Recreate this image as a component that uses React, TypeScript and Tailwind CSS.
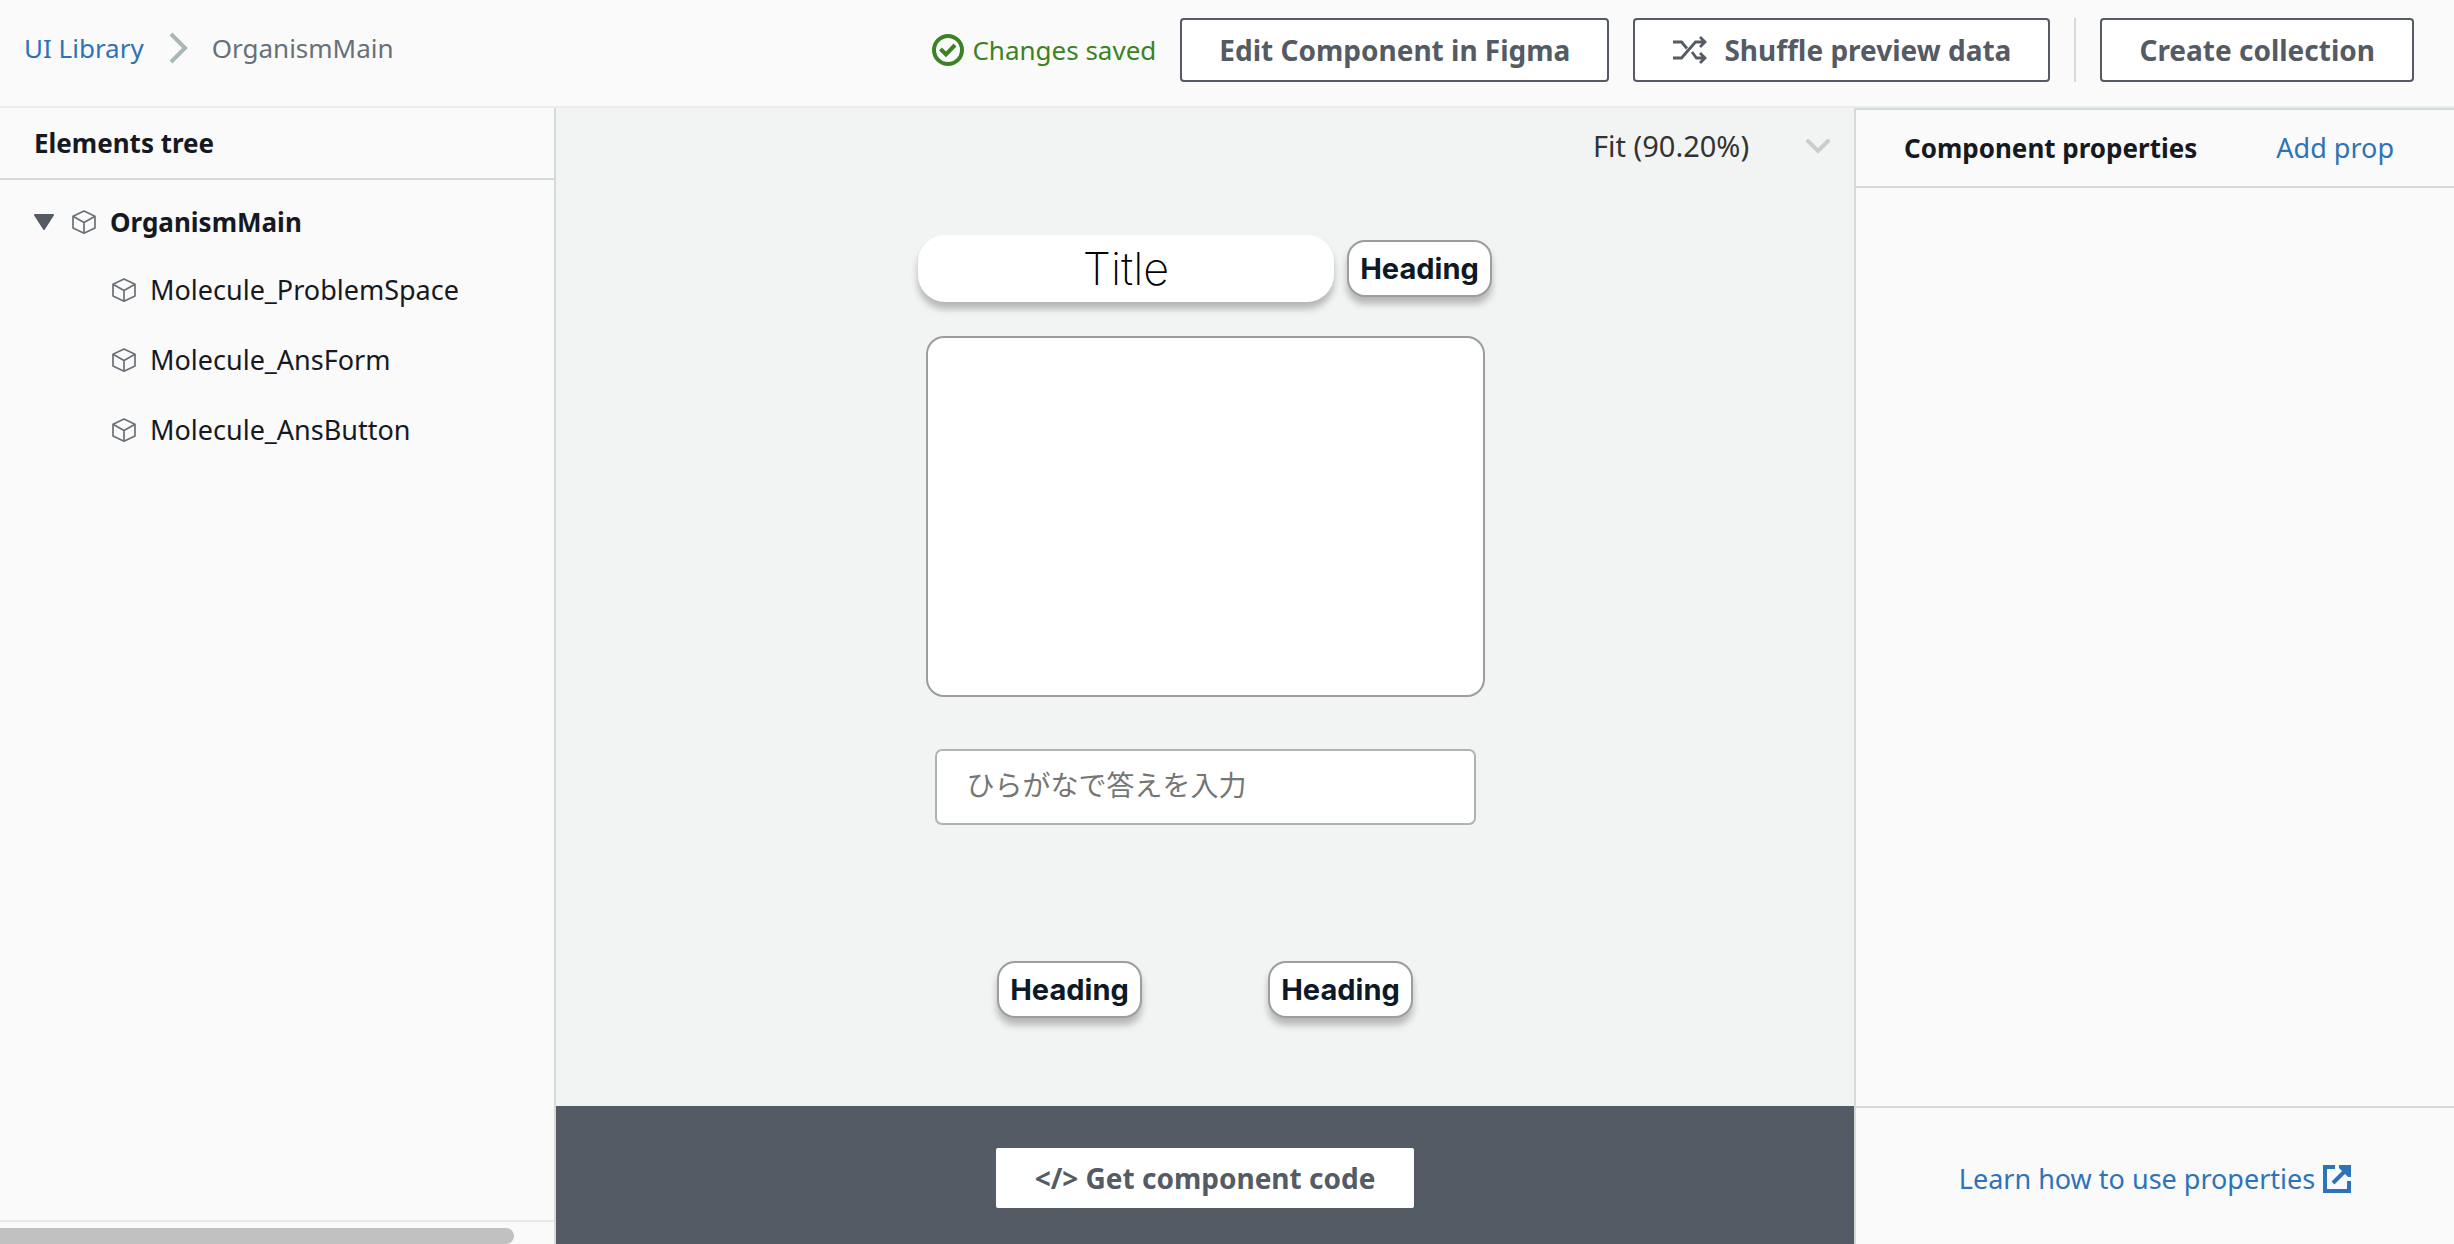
import React from "react";

const children = ["Molecule_ProblemSpace", "Molecule_AnsForm", "Molecule_AnsButton"];

function CubeIcon() {
  return (
    <svg className="size-6 shrink-0" viewBox="0 0 24 24" fill="none" stroke="#687078" strokeWidth="1.7" strokeLinejoin="round" aria-hidden="true">
      <path d="M12 1 23 6.2V18L12 23.2 1 18V6.2ZM1 6.2 12 12.5 23 6.2M12 12.5V23" />
    </svg>
  );
}

function ShuffleIcon() {
  return (
    <svg className="h-7 w-9 shrink-0" viewBox="0 0 36 28" fill="none" stroke="currentColor" strokeWidth="2.8" aria-hidden="true">
      <path d="M1 6h8.500l5.500 6.500M20 16l4.500 6H33M1 22h8.500L23.500 6H33M28 1l5 5-5 5M28 17l5 5-5 5" />
    </svg>
  );
}

function HeadingButton() {
  return (
    <button className="h-[57px] w-[145px] rounded-[18px] border-2 border-[#9c9d9d] bg-white text-center font-[Inter,sans-serif] text-[29px] leading-none font-bold text-[#0d1926] shadow-[0_7px_7px_rgba(0,0,0,0.25)]">
      Heading
    </button>
  );
}

const headerButton =
  "flex h-16 items-center justify-center rounded-[4px] border-2 border-[#545b64] bg-white px-[37px] text-[28px] font-bold text-[#545b64] whitespace-nowrap";

export default function App() {
  return (
    <div className="flex min-h-screen flex-col bg-[#fafafa] font-['Noto_Sans',sans-serif] text-[27px] leading-9 text-[#16191f]">
      <header className="flex h-[108px] items-start justify-between border-b-2 border-[#eaeded] pt-[18px] pr-10 pl-6">
        <nav aria-label="Breadcrumb" className="flex h-[60px] items-center gap-6 text-[26px]">
          <a href="#library" className="text-[#2e73b8]">UI Library</a>
          <svg className="h-8 w-5" viewBox="0 0 20 32" fill="none" stroke="#aab7b8" strokeWidth="4" aria-hidden="true">
            <path d="M3 2 17 16 3 30" />
          </svg>
          <span className="text-[#687078]">OrganismMain</span>
        </nav>
        <div className="flex items-center gap-6">
          <div className="flex items-center gap-2 text-[26px] text-[#3c8224]" role="status">
            <svg className="size-8" viewBox="0 0 32 32" fill="none" stroke="currentColor" strokeWidth="4" aria-hidden="true">
              <circle cx="16" cy="16" r="14" />
              <path d="m8.500 15 5.500 5.500L23 11" />
            </svg>
            <span>Changes saved</span>
          </div>
          <button className={headerButton}>Edit Component in Figma</button>
          <button className={headerButton + " gap-4"}>
            <ShuffleIcon />
            Shuffle preview data
          </button>
          <div className="h-16 w-0.5 bg-[#d5dbdb]" />
          <button className={headerButton}>Create collection</button>
        </div>
      </header>

      <div className="flex flex-1">
        <aside className="flex w-[556px] shrink-0 flex-col border-r-2 border-[#d5dbdb]">
          <h2 className="flex h-[72px] items-center border-b-2 border-[#d5dbdb] px-[34px] text-[26px] font-bold">Elements tree</h2>
          <ul className="flex-1 pt-[9px]">
            <li>
              <button className="flex h-[66px] items-center pl-[34px] text-[26px] font-bold" aria-expanded="true">
                <svg className="h-4 w-5" viewBox="0 0 20 16" fill="#545b64" stroke="#545b64" strokeWidth="2" strokeLinejoin="round" aria-hidden="true">
                  <path d="M1 1h18L10 15Z" />
                </svg>
                <span className="ml-[18px] flex items-center gap-[14px]">
                  <CubeIcon />
                  OrganismMain
                </span>
              </button>
              <ul>
                {children.map((name) => (
                  <li key={name}>
                    <button className="flex h-[70px] items-center gap-[14px] pl-28">
                      <CubeIcon />
                      {name}
                    </button>
                  </li>
                ))}
              </ul>
            </li>
          </ul>
          <div className="flex h-6 items-end border-t-2 border-[#e8e8e8]">
            <div className="h-4 w-[514px] rounded-r-full bg-[#c1c1c1]" />
          </div>
        </aside>

        <main className="flex min-w-0 flex-1 flex-col bg-[#f2f4f4]">
          <div className="flex h-[76px] items-center justify-end pr-6">
            <label className="relative flex items-center text-[29px] text-[#333333]">
              <select aria-label="Zoom" className="appearance-none bg-transparent pr-20 outline-none">
                <option>Fit (90.20%)</option>
              </select>
              <svg className="pointer-events-none absolute right-0 h-4 w-6" viewBox="0 0 24 16" fill="none" stroke="#cccccc" strokeWidth="4" strokeLinecap="round" aria-hidden="true">
                <path d="m2 3 10 10L22 3" />
              </svg>
            </label>
          </div>
          <div className="flex flex-1 flex-col items-center pt-[51px]">
            <div className="flex items-center gap-[13px]">
              <div className="flex h-[67px] w-[416px] items-center justify-center rounded-[27px] bg-white font-[Inter,sans-serif] text-[45px] leading-none font-extralight text-black shadow-[0_7px_7px_rgba(0,0,0,0.25)]">
                Title
              </div>
              <HeadingButton />
            </div>
            <div className="mt-[34px] h-[361px] w-[559px] rounded-[18px] border-2 border-[#9c9d9d] bg-white" />
            <input
              aria-label="答え"
              placeholder="ひらがなで答えを入力"
              className="mt-[52px] h-[76px] w-[541px] rounded-[7px] border-2 border-[#aeb3b7] bg-white px-[30px] pb-1.5 font-['Noto_Sans_CJK_JP',sans-serif] text-[28px] placeholder:text-[#757575]"
            />
            <div className="mt-[136px] flex gap-[126px]">
              <HeadingButton />
              <HeadingButton />
            </div>
          </div>
          <div className="flex h-[138px] items-start justify-center bg-[#545b64] pt-[42px]">
            <button className="h-[60px] rounded-[2px] bg-white px-[39px] text-[28px] font-bold text-[#545b64]">&lt;/&gt; Get component code</button>
          </div>
        </main>

        <aside className="flex w-[600px] shrink-0 flex-col border-t-2 border-l-2 border-[#d5dbdb]">
          <div className="flex h-[78px] items-center justify-between border-b-2 border-[#d5dbdb] pr-[60px] pl-12">
            <h2 className="text-[26px] font-bold">Component properties</h2>
            <button className="text-[#2e73b8]">Add prop</button>
          </div>
          <div className="flex-1" />
          <div className="flex h-[138px] items-center justify-center border-t-2 border-[#d5dbdb] pt-1.5">
            <a href="#properties" className="flex items-center gap-2 text-[#2e73b8]">
              Learn how to use properties
              <svg className="size-7" viewBox="0 0 28 28" fill="none" stroke="currentColor" strokeWidth="4" aria-hidden="true">
                <path d="M12 2H2v24h24V16M10 18 24 4" />
                <path d="M16 0h12v12h-3L16 3Z" fill="currentColor" stroke="none" />
              </svg>
            </a>
          </div>
        </aside>
      </div>
    </div>
  );
}
